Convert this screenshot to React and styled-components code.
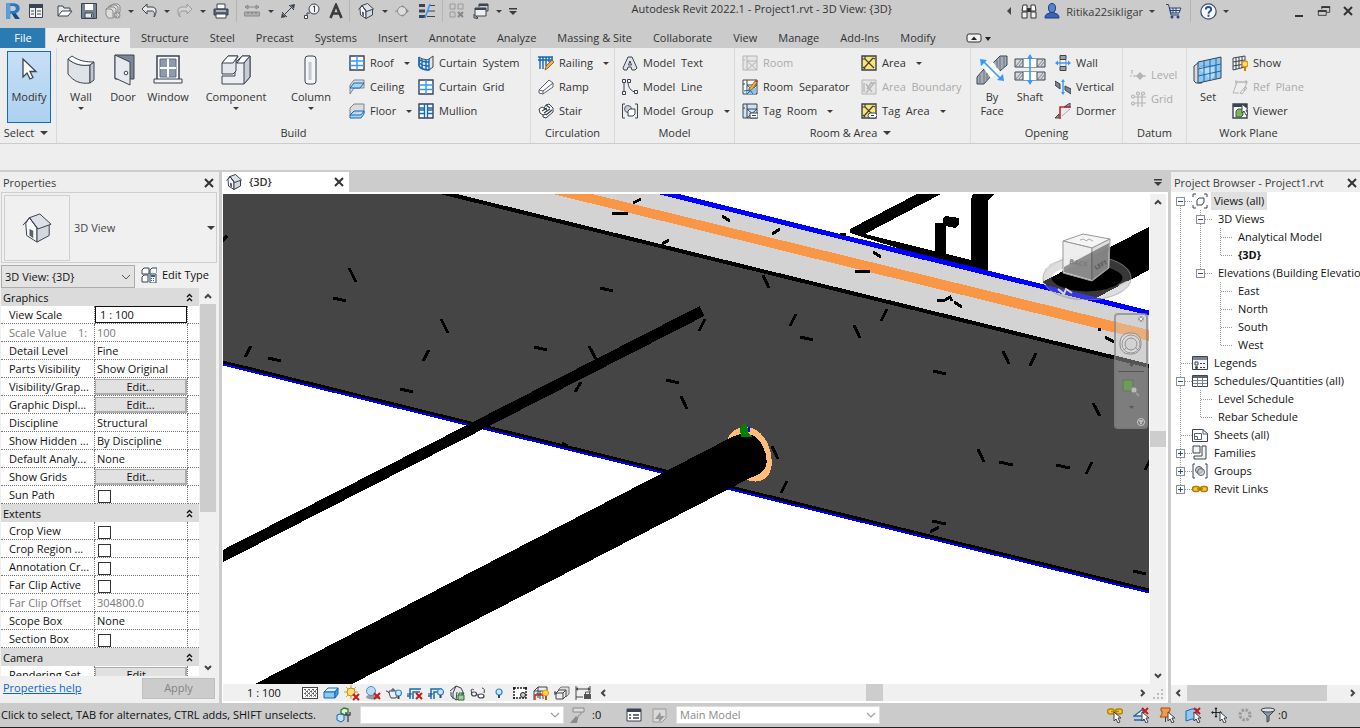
import React from 'react'
import styled, { createGlobalStyle, css } from 'styled-components'

const GlobalStyle = createGlobalStyle`
  * { box-sizing: border-box; }
  body {
    margin: 0;
    overflow: hidden;
    background: #cccccc;
    color: #1e1e1e;
    font-family: "Open Sans", "Noto Sans", sans-serif;
    font-size: 11px;
    line-height: 16px;
  }
  button, input, select {
    font: inherit;
    color: inherit;
    margin: 0;
    padding: 0;
    border: 0;
    border-radius: 0;
    background: none;
  }
  svg { display: block; flex: none; }
`

/* ---------- icons ---------- */

const ink = '#3a4351'
const blue = '#1468b8'
const sky = '#3399ff'
const off = '#b4b4b4'

const line = (d, stroke = ink, width = 1, fill = 'none') => (
  <path d={d} stroke={stroke} strokeWidth={width} fill={fill} />
)

const redX = (x, y) => line(`M${x} ${y}l6 6M${x + 6} ${y}l-6 6`, '#d01818', 2)
const bulb = (x, y) => (
  <g>
    <circle cx={x} cy={y} r="3" fill="#cfe6fb" stroke="#2d83d6" strokeWidth="1.2" />
    <path d={`M${x - 1} ${y + 3}h2v3h-2z`} fill={ink} />
  </g>
)
const cursor = (x, y) => (
  <path
    transform={`translate(${x} ${y})`}
    d="M0 0v9l2-2 2 4 2-1-2-4h3z"
    fill="#fff"
    stroke={ink}
    strokeWidth="1"
  />
)
const pencil = (
  <g>
    <path d="M8 9l5-7 2 1.500-5 7-3 1.500z" fill="#f5b335" stroke="#8a5a12" strokeWidth=".8" />
    <path d="M13 2l1-1.500 2 1.500-1 1.500z" fill="#c0392b" />
  </g>
)
const house = (
  <g strokeLinejoin="round" stroke={ink}>
    <path d="M4 11l4-6 8 11v15L5 24z" fill="#fbfbfc" vectorEffect="non-scaling-stroke" />
    <path d="M16 15l13-4v13l-13 7z" fill="#d3d7de" vectorEffect="non-scaling-stroke" />
    <path d="M8 5l11-4 12 11-14 5z" fill="#dde1e7" vectorEffect="non-scaling-stroke" />
    <path d="M1 13l7-8 9 12" fill="none" vectorEffect="non-scaling-stroke" />
    <path d="M8 17l4 2v8l-4-3z" fill="#59616e" stroke="none" />
  </g>
)
const roomBox = (color, fill) => (
  <g>
    <path d="M1 1h14v14H1z" fill={fill} stroke={color} />
    <path d="M5 1v5M1 5h2" stroke={color} fill="none" />
    <path d="M5 6h10M5 6v9M5 6l10 9M15 6L5 15" stroke={color} fill="none" />
  </g>
)
const areaBox = (
  <g>
    <path d="M1 1h14v14H1z" fill="#ffe36b" stroke={ink} strokeWidth="1.400" />
    <path d="M4 1v3H1M4 4l9 9M12 3l-9 10M12 3l2 1M2 12l2 2" stroke={ink} fill="none" strokeWidth="1.200" />
  </g>
)

const glyphs = {
  close: line('M4 4l8 8M12 4l-8 8', '#333', 2),
  chevronDown: line('M4 6l4 4 4-4', '#555', 1),
  chevronPale: line('M4 6l4 4 4-4', '#a0a0a0', 1.2),
  chevronUp: line('M5 10l3-3 3 3', '#444', 2),
  chevronDn: line('M5 6l3 3 3-3', '#444', 2),
  chevronLeft: line('M9 5L6 8l3 3', '#444', 2),
  chevronRight: line('M7 5l3 3-3 3', '#444', 2),
  collapse: line('M5 8l2.500-2.500L10 8M5 12l2.500-2.500L10 12', '#111', 1.4),
  caret: <path d="M5 7h6l-3 3z" fill="#3c3c3c" />,
  caretBig: <path d="M4 6h8l-4 4z" fill="#3c3c3c" />,
  caretLeft: <path d="M10 4v8L6 8z" fill="#444" />,
  more: <path d="M4 5h8v1.500H4zM4 8h8l-4 4z" fill="#3c3c3c" />,

  revit: (
    <g>
      <path d="M2 1h6c4 0 6 2 6 4.500S12 9.500 10.500 10L14 15h-4L7 10.500H5.500V15H2z" fill="#2c78bd" />
      <path d="M5.500 3.500v4.500H8c1.500 0 2.500-1 2.500-2.200S9.500 3.500 8 3.500z" fill="#cbcbcb" />
      <path d="M2 1h3.500v14H2z" fill="#5b9fd8" />
      <path d="M7 10.500h3.500L14 15h-4z" fill="#174d83" />
    </g>
  ),
  ui: (
    <g>
      <path d="M1.500 1.500h13v13h-13z" fill="#f4f4f4" stroke={ink} />
      <path d="M1 1h14v4H1z" fill={ink} />
      {line('M3 8h3M3 11h3M9 8h4M9 11h4M7.500 5v10')}
    </g>
  ),
  open: (
    <g strokeLinejoin="round">
      <path d="M1 13V3h5l1 2h6v3" fill="#e9e9e9" stroke={ink} />
      <path d="M1 13l4-5h10l-4 5z" fill="#fff" stroke={ink} />
    </g>
  ),
  save: (
    <g>
      <path d="M.5.500h15v15h-15z" fill="#788494" stroke={ink} />
      <path d="M4 1h8v6H4z" fill="#fff" />
      <path d="M4 10h8v5H4z" fill="#e8e8e8" stroke={ink} />
      <path d="M10 11h1v3h-1z" fill={ink} />
    </g>
  ),
  sync: (
    <g>
      <path d="M5 4l3-3h5l2 2v6l-3 3M1 6l3-2h5l2 2v6l-3 3H3l-2-3zM1 6h5l2 2v6M3 4l3-2h5l2 2v6" fill="#dcdcdc" stroke="#888" />
      <circle cx="12" cy="12" r="3.500" fill="#999" />
      {line('M10 12h4M12 10l2 2-2 2', '#ddd')}
    </g>
  ),
  undo: line('M6 1L1 6l5 5V8h5c2 0 3 2 2 6 3-4 3-10-2-10H6z', ink, 1, '#e8e8e8'),
  redo: line('M10 1l5 5-5 5V8H5c-2 0-3 2-2 6-3-4-3-10 2-10h5z', '#9a9a9a', 1, '#d4d4d4'),
  print: (
    <g>
      <path d="M4 1h8v5H4z" fill="#fff" stroke={ink} />
      <path d="M1 6h14v6H1z" fill="#59616e" stroke={ink} />
      <path d="M3 8h10" stroke="#fff" />
      <path d="M3 11h10v4H3z" fill="#fff" stroke={ink} />
    </g>
  ),
  measure: (
    <g>
      {line('M1 4h14M1 4l3-2v4zM15 4l-3-2v4z', '#888')}
      <path d="M.5 9h15v4H.500z" fill="#b0b0b0" stroke="#8a8a8a" />
      {line('M4 9v2M8 9v2M12 9v2', '#777')}
    </g>
  ),
  dim: (
    <g>
      {line('M3 13L13 3M2 9l5 5M9 2l5 5')}
      <path d="M1 15l1-5 4 4zM15 1l-5 1 4 4z" fill={ink} />
    </g>
  ),
  tag: (
    <g>
      {line('M2 14h1v-4h3')}
      <path d="M.5 12.500h3v3h-3z" fill="#fff" stroke={ink} />
      <circle cx="10" cy="6" r="5" fill="#f1f1f1" stroke={ink} />
      {line('M9 4l1.500-1v6')}
    </g>
  ),
  textA: line('M2.500 15L8 2l5.500 13M5 10.500h6', '#3c3c3c', 2.6),
  house,
  section: (
    <g>
      <circle cx="8" cy="8" r="4.500" fill="#ddd" stroke="#8a8a8a" />
      <path d="M8 2l7 6-7 6V12a4 4 0 000-8z" fill="#8a8a8a" />
      {line('M1 8h3', '#8a8a8a')}
    </g>
  ),
  thin: (
    <g>
      <path d="M0 1h6v3H0zM0 6.500h6v3H0zM0 12h6v3H0z" fill={ink} />
      {line('M10 2.500h6M9 8h7M8 13.500h8')}
      {line('M6 15L11 1', sky, 1.5)}
    </g>
  ),
  closeHidden: (
    <g>
      {line('M1 1h5v5H1zM9 1h5v5H9zM1 9h5v5H1z', '#999')}
      {line('M9 9l5 5M14 9l-5 5', '#888', 2)}
    </g>
  ),
  switchWin: (
    <g>
      {line('M6 4V1h9v7h-2')}
      <path d="M6 1h9v2H6z" fill={ink} />
      <path d="M2 5h11v8H2z" fill="#eee" stroke={ink} />
      <path d="M2 5h11v2H2z" fill={ink} />
      {line('M1 11v4h4M3 13l2 2-2 1')}
    </g>
  ),
  binoculars: (
    <g>
      <path d="M2 2h4v6H1zM10 2h4l1 6h-5z" fill="#fff" stroke="#333" />
      <path d="M1 9h5v6H1zM10 9h5v6h-5z" fill="#eee" stroke="#333" />
      <path d="M6 5h4v4H6z" fill="#333" />
    </g>
  ),
  user: (
    <g>
      <path d="M1 15c0-4 2-4 5-5V8h4v2c3 1 5 1 5 5z" fill="#3563b8" stroke="#1f3d7c" />
      <ellipse cx="8" cy="5" rx="3.500" ry="4.500" fill="#5483d6" stroke="#1f3d7c" />
    </g>
  ),
  cart: (
    <g>
      <path d="M3.500 5H15l-2 5H5z" fill="#dfe6f3" stroke="#2c4474" />
      {line('M0 1.500h2.500L5 12h8M7 5v5M10 5v5M4 7.500h10', '#2c4474')}
      <circle cx="6" cy="14" r="1.500" fill="#2c4474" />
      <circle cx="12" cy="14" r="1.500" fill="#2c4474" />
    </g>
  ),
  help: (
    <g>
      <circle cx="8" cy="8" r="7.200" fill="#f7f9fc" stroke="#44506a" strokeWidth="1.200" />
      {line('M5.500 6c0-3 5-3 5 0 0 2-2.500 1.500-2.500 4M8 11v2', '#1f4e9c', 1.8)}
    </g>
  ),
  minimise: line('M4 13h8', '#333', 2),
  restore: (
    <g>
      {line('M5.500 6V3.500h9v6H11', '#333', 1)}
      {line('M5 3.500h10', '#333', 2)}
      {line('M1.500 8h9v5h-9z', '#333', 1)}
      {line('M1 8h10', '#333', 2)}
    </g>
  ),

  modify: <path d="M10 5v18l4-4 3 6 3-1.500-3-6h6z" fill="#fff" stroke={ink} strokeWidth="1.300" />,
  wall: (
    <g strokeLinejoin="round" stroke={ink}>
      <path d="M3 5c8 6 15 7 22 6v18C16 30 9 28 3 20z" fill="#dfe2e7" />
      <path d="M3 5l4-3c7 5 14 6 22 6l-4 3C17 12 10 11 3 5z" fill="#fff" />
      <path d="M25 11l4-3v18l-4 3z" fill="#c3c8d0" />
    </g>
  ),
  door: (
    <g stroke={ink}>
      <path d="M8 1h19v24H8z" fill="#7e8797" />
      <path d="M8 1l15 7v23L8 24z" fill="#e6e9ed" strokeLinejoin="round" />
      <circle cx="19" cy="19" r="1.800" fill="#fff" />
    </g>
  ),
  window: (
    <g stroke={ink}>
      <path d="M5 2h22v24H5z" fill="#fff" strokeWidth="1.500" />
      <path d="M8 5h16v18H8z" fill="#8f9bad" stroke="#5f6a7b" />
      <path d="M16 5v18M8 14h16" stroke="#fff" strokeWidth="2" />
      <path d="M2 25h28v4H2z" fill="#f3f4f6" />
    </g>
  ),
  component: (
    <g stroke={ink} strokeLinejoin="round">
      <path d="M2 22h13V11l2-4 5-5h8v21l-6 7H2z" fill="#eceef1" />
      <path d="M2 9l6-7h10l-2 4v11l-3 3H2z" fill="#e3e6ea" />
      <path d="M2 9l6-7h10l-5 7z" fill="#fff" />
      <path d="M17 9l5-7h8l-6 7z" fill="#fff" />
      <path d="M24 9l6-7v21l-6 7z" fill="#c8cdd5" />
    </g>
  ),
  column: (
    <g stroke={ink}>
      <rect x="10" y="2" width="11" height="28" rx="3" fill="#f5f6f8" />
      <path d="M15 8v18" stroke="#c4c9d1" strokeWidth="3" />
    </g>
  ),
  roof: (
    <g>
      <path d="M1 1h14v14H1z" fill="#fff" stroke={ink} strokeWidth="1.400" />
      {line('M8 1v14M1 6h14M1 10.500h14', sky, 1.4)}
    </g>
  ),
  ceiling: (
    <g>
      <path d="M1 6l4-5h10v8H5l-4 6z" fill="#d9dce0" stroke="#7c8490" />
      <path d="M1 9l4-5h10l-4 5z" fill="#a8d4f5" stroke={blue} />
    </g>
  ),
  floor: (
    <g>
      <path d="M1 12V5l4-4h10v9l-4 4" fill="#d9dce0" stroke="#7c8490" />
      <path d="M1 12l4-4h10l-3 4zM1 12v3h11l3-4V8" fill="#a8d4f5" stroke={blue} />
    </g>
  ),
  curtainSystem: (
    <g strokeLinejoin="round">
      <path d="M1 2c4 3 9 3 10 2l4-3v11l-4 3c-4 0-8-1-10-4z" fill="#e4e7ec" stroke={ink} />
      {line('M1 5c4 2 7 2 10 2M1 8c4 3 7 3 10 3M4 4v9M8 5v10M1 2v9c2 3 6 4 10 4V4', blue, 1.4)}
    </g>
  ),
  mullion: (
    <g>
      <path d="M1 1h14v14H1z" fill="#fff" stroke={ink} strokeWidth="1.400" />
      {line('M6.500 1v14M9.500 1v14M1 5h5M1 10.500h5M10 5h5M10 10.500h5M1 7h5M10 7h5', blue, 1.4)}
    </g>
  ),
  railing: (
    <g>
      {line('M0 2h15M0 5h15M2 2v12M5 2v12M8 2v9M11 2v5M14 2v3', blue, 1.4)}
      <path d="M7 15l1-4 6-6 2 2-6 6z" fill="#f5b335" stroke="#8a4a12" strokeWidth=".8" />
    </g>
  ),
  ramp: (
    <g strokeLinejoin="round">
      <path d="M1 11L11 1l4 3v4L5 15 1 14z" fill="#fff" stroke="#5a626e" />
      {line('M1 11l4 1L15 4M5 12v3', '#5a626e')}
    </g>
  ),
  stair: (
    <g strokeLinejoin="round">
      <path d="M1 6l3-2 2 1 2-3 3-1 4 4v4l-7 6-3-1V12L2 10z" fill="#fff" stroke={ink} />
      {line('M4 8l5-3M6 10l6-4M8 12l6-5M6 5l3 2M8 2l4 3M5 12l3-1', ink, 1.3)}
    </g>
  ),
  modelText: (
    <g strokeLinejoin="round">
      <path d="M1 13L6 2h4l5 11-2 2h-3l-1-3H6l-1 3H2z" fill="#dfe2e7" stroke={ink} />
      <path d="M8 6l1.500 4H6.500z" fill="#fff" stroke={ink} />
    </g>
  ),
  modelLine: (
    <g>
      {line('M2 3v10M6 3c0 5 3 10 8 10')}
      {line('M.5.500h3v3h-3zM.5 12.500h3v3h-3zM5.500.500h3v3h-3zM12.500 11.500h3v3h-3z', ink, 1, '#fff')}
    </g>
  ),
  modelGroup: (
    <g>
      {line('M3 1H.500v14H3M13 1h2.500v14H13')}
      <circle cx="6" cy="6" r="3.500" fill="#c9ced6" stroke="#5a626e" />
      <path d="M6 8l2-2h5v5l-2 2H6z" fill="#fff" stroke={ink} />
    </g>
  ),
  room: roomBox(off, '#e6e6e6'),
  roomSep: (
    <g>
      {roomBox(ink, '#fff')}
      <path d="M5 9h9v6H5z" fill="#8cc4ee" />
      {line('M2 12l6-1M8 11l3 4M5 15l4-4', blue)}
      {pencil}
    </g>
  ),
  tagRoom: (
    <g>
      {roomBox(ink, '#cfe3f3')}
      <path d="M8 10h8v5H8z" fill="#fff" stroke={ink} />
      {line('M10 12.500h4')}
    </g>
  ),
  area: areaBox,
  areaBoundary: (
    <g>
      <path d="M1 1h14v14H1z" fill="#e6e6e6" stroke={off} />
      {line('M5 5l6 8M3 4v9M9 4h5M5 14L14 3M6 10l5-7', off, 1.3)}
    </g>
  ),
  tagArea: (
    <g>
      {areaBox}
      <rect x="7" y="10" width="9" height="5" rx="2.500" fill="#fff" stroke={ink} />
      {line('M10 12.500h3')}
    </g>
  ),
  byFace: (
    <g>
      <path d="M1 23l7-8 7 7-7 8H1z" fill="#a6acb6" stroke={ink} />
      <path d="M17 9l7-7h7v9l-7 6z" fill="#a6acb6" stroke={ink} />
      <path d="M8 15l9-7 7 9-9 7z" fill="#fff" />
      {line('M4 21v9M8 16v14M11 19v7M21 6v8M24 3v13M28 3v10', '#6a727e')}
      {line('M7 7l18 18', sky, 1.6)}
      <path d="M4 5l7 1-6 6zM28 27l-1-7-6 6z" fill={sky} />
    </g>
  ),
  shaft: (
    <g>
      <path d="M1 5h30v8H1zM1 18h30v8H1z" fill="#d4d7dc" stroke={ink} />
      <path d="M9 5h14v8H9zM9 18h14v8H9z" fill="#fff" />
      {line('M9 5v8M23 5v8M9 18v8M23 18v8')}
      {line('M2 12l5-6M5 12l4-5M24 12l5-6M27 12l4-5M2 25l5-6M5 25l4-5M24 25l5-6M27 25l4-5', '#7d8590')}
      {line('M16 3v26', sky, 1.6)}
      <path d="M16 0l3 5h-6zM16 31l3-5h-6z" fill={sky} />
    </g>
  ),
  openWall: (
    <g>
      <path d="M5 .5h6v4H5zM5 11.500h6v4H5z" fill="#9aa1ab" stroke={ink} />
      {line('M5 5v6M11 5v6', '#888')}
      {line('M2 8h12', sky, 1.4)}
      <path d="M0 8l3-2.500v5zM16 8l-3-2.500v5z" fill={sky} />
    </g>
  ),
  openVertical: (
    <g>
      <path d="M0 2l5 3v5L0 6zM10 7l6 3v5l-6-4z" fill="#7d8590" stroke={ink} />
      {line('M8 2v12', sky, 1.4)}
      <path d="M8 0l2 3H6zM8 16l2-3H6z" fill={sky} />
    </g>
  ),
  dormer: (
    <g>
      <path d="M0 15l4-4v4zM9 4l6-4v4z" fill="#9aa1ab" stroke={ink} />
      {line('M5 16V4h11', '#c62828', 1.6)}
      {line('M7 13l8-7', '#aaa')}
    </g>
  ),
  level: (
    <g>
      {line('M0 9h2M3 9h2M14 9h2M1 4l1-1v4M4 9h11', off)}
      <path d="M10 5l4 4-4 4-4-4z" fill={off} />
    </g>
  ),
  grid: line('M5 6h11M5 12h11M8 4v12M12 4v12M8 1a1.500 1.500 0 100 3 1.500 1.500 0 000-3M13 1a1.500 1.500 0 100 3 1.500 1.500 0 000-3M3 4a1.500 1.500 0 100 3 1.500 1.500 0 000-3M3 11a1.500 1.500 0 100 3 1.500 1.500 0 000-3', off, 1.2),
  setPlane: (
    <g strokeLinejoin="round">
      <path d="M2 12l4-3h4v20H4l-2-2z" fill="#d7dbe1" stroke={ink} />
      <path d="M6 8l23-5v21L6 29z" fill="#8fc8ee" stroke={ink} />
      <path d="M6 14l4-2h13v11l-4 3" fill="#b9dcf5" stroke="#7d9cb8" />
      {line('M12 7v21M18 6v20M24 4v21M6 15l23-5M6 22l23-5', blue, 1)}
    </g>
  ),
  show: (
    <g>
      <path d="M1 3l12-2v11L1 15z" fill="#f2f3f5" stroke={ink} />
      {line('M4 3v11M7 2v11M10 2v11M1 7l12-2M1 11l12-2')}
      <circle cx="13" cy="9" r="3" fill="#ffe27a" stroke="#ef8e00" strokeWidth="1.300" />
      <path d="M12 12h2v4h-2z" fill="#d67a00" />
    </g>
  ),
  refPlane: line('M1 14L5 3h10l-3 9M1 14h6M3 3h13M4 1v4M14 1v4M8 14l5-6 2 1-5 6z', off),
  viewer: (
    <g>
      <path d="M1 1h14v14H1z" fill="#fff" stroke={ink} strokeWidth="1.400" />
      <path d="M1 1h14v3H1z" fill={ink} />
      <path d="M4 8l2-2h5v6l-2 2H4z" fill="#7fb35a" stroke="#2f6b2c" />
      {cursor(10, 1)}
    </g>
  ),
  editType: (
    <g>
      {line('M1 3l2-2h5v6H1zM9 3l2-2h5v5M1 10l2-2h4v7H1zM9 3v4', ink, 1, '#fff')}
      <path d="M9 7h6v9H9z" fill="#fff" stroke={ink} />
      <path d="M10 8h4v2h-4zM10 11h1v1h-1zM12 11h1v1h-1zM10 13h1v1h-1zM12 13h1v1h-1z" fill={blue} />
    </g>
  ),

  detail: (
    <g shapeRendering="crispEdges">
      <path d="M.5 2.500h15v11H.500z" fill="#fff" stroke="#444" />
      <path d="M2 4.500h13M2 8.500h13" stroke="#666" strokeDasharray="2 2" />
      <path d="M4 6.500h11M4 10.500h11" stroke="#666" strokeDasharray="2 2" />
      <path d="M3 5.500h12M3 7.500h12M3 9.500h12M3 11.500h12" stroke="#999" strokeDasharray="1 1" />
    </g>
  ),
  style: (
    <g strokeLinejoin="round">
      <path d="M1 7l4-4h10l-3 4z" fill="#dff1ff" stroke={blue} />
      <path d="M1 7h11v6H1z" fill="#8cc8f2" stroke={blue} />
      <path d="M12 7l3-4v6l-3 4z" fill="#4b9fdc" stroke={blue} />
    </g>
  ),
  sun: (
    <g>
      {line('M7 0v14M0 7h14M2 2l10 10M12 2L2 12', '#d9a21f')}
      <circle cx="7" cy="7" r="4" fill="#ffe27a" stroke="#c98a10" />
      {redX(9, 9)}
    </g>
  ),
  shadow: (
    <g>
      <ellipse cx="8" cy="12" rx="7" ry="2.500" fill="#9a9a9a" />
      <circle cx="6" cy="6" r="4.500" fill="#b9dcf6" stroke="#4b8fc8" />
      {redX(9, 8)}
    </g>
  ),
  teapot: (
    <g>
      <path d="M3 6h8c1 3 0 5-1 7H5C4 11 3 9 3 6zM3 8L1 6H0M5 5h4M7 3v2" fill="#eee" stroke={ink} />
      {bulb(12.5, 8)}
    </g>
  ),
  crop: (
    <g>
      {line('M0 11h3M3 14V4h11M6 14V7h7', blue, 1.5)}
      {line('M0 9h5')}
      {redX(9, 8)}
    </g>
  ),
  cropRegion: (
    <g>
      {line('M0 11h3M3 14V4h11M6 14V7h7', blue, 1.5)}
      {line('M0 9h5')}
      {bulb(12.5, 7)}
    </g>
  ),
  lockView: (
    <g>
      <path d="M1 6l6-5 5 2 3 6-2-1v5l-6 2-5-4V7" fill="#e7e9ed" stroke={ink} />
      {line('M7 1L4 8v6M8 7l-1 8')}
      <path d="M9 10h6v5H9z" fill="#9fd0a4" stroke="#2f6b2c" />
      {line('M10 10V8h4v2', '#2f6b2c')}
    </g>
  ),
  glasses: (
    <g>
      {line('M1 5c1-1 2-1 3 0M12 3c2 0 3 2 2 5M1 5l1 4M5 9l3 1')}
      <ellipse cx="4" cy="9" rx="2.500" ry="2" fill="#fff" stroke={ink} strokeWidth="1.200" />
      <ellipse cx="11" cy="11" rx="3" ry="2" fill="#fff" stroke={ink} strokeWidth="1.200" />
    </g>
  ),
  reveal: bulb(8, 7),
  tempView: (
    <g>
      <path d="M2 3h12v10H2z" fill="#fff" stroke="#222" strokeDasharray="2 1" strokeWidth="1.500" />
      {line('M1 3h2M13 3h2M1 13h2', '#222', 2)}
      <circle cx="11" cy="10" r="2.500" fill="#ccc" stroke="#222" />
    </g>
  ),
  analytical: (
    <g>
      {line('M1 6l4-4h9M1 6h9v8M1 6v9M5 2v11M14 2v6M3 9h9M7 6v8', ink)}
      {line('M2 9v6M2 10h8', '#c62828', 1.4)}
      <circle cx="12.500" cy="8" r="3" fill="#ffd54a" stroke="#ef8e00" />
      <path d="M12 11h2v4h-2z" fill="#a85d00" />
    </g>
  ),
  displace: (
    <g>
      <path d="M4 5l3-3h8v7l-3 3" fill="#ddd" stroke="#777" />
      <path d="M2 8l3-3h7v6l-3 3H2zM2 8h7v6M9 8l3-3" fill="#eee" stroke="#444" />
      {line('M1 6v4M0 8h3')}
    </g>
  ),
  constraints: (
    <g>
      {line('M1 1v14M15 1v7M1 4h14M1 12h7', '#444')}
      <path d="M3 2v4L1 4zM13 2v4l2-2z" fill="#444" />
      <path d="M9 9h7v5H9z" fill="#555" />
      {line('M10.500 9V7h4v2', '#555')}
    </g>
  ),

  worksets: (
    <g>
      <path d="M5 3l3-2 4 1v4l-3 2-4-2z" fill="#dff0d9" stroke="#2f7b2c" strokeWidth="1.300" />
      <path d="M1 8l3-1 4 1v5l-3 2-4-2z" fill="#c5e3f8" stroke={blue} />
      {line('M12 8v7M10 5v3h4V5', ink, 1.3)}
    </g>
  ),
  design: (
    <g>
      <path d="M3 1h11v4H3zM11 5v2L8 9v2H6L3 14" fill="#ddd" stroke="#8a8a8a" />
      <path d="M6 9l2 2-1 5H0z" fill="#8a8a8a" />
    </g>
  ),
  options: (
    <g>
      <path d="M1 2h14v12H1z" fill="#fff" stroke={ink} />
      <path d="M1 2h14v3H1z" fill={ink} />
      {line('M3 8h2M3 11h2M7 8h6M7 11h6', ink, 1.4)}
    </g>
  ),
  addSet: (
    <g>
      <path d="M1 2h13v9l-4 4H1z" fill="#d9d9d9" stroke="#999" />
      <path d="M8 5l-5 7h4v3l6-6H9z" fill="#999" />
    </g>
  ),
  pickLink: (
    <g>
      {line('M3 2h2a2.500 2.500 0 010 5H3a2.500 2.500 0 010-5zM11 2h2a2.500 2.500 0 010 5h-2a2.500 2.500 0 010-5zM4 4.500h8', '#b98500', 1.5, '#f6c73a')}
      {cursor(7, 5)}
    </g>
  ),
  pickUnderlay: (
    <g>
      <path d="M1 9l9-7v7zM1 13h11" fill="#e8f3fc" stroke={blue} strokeWidth="1.300" />
      {redX(9, 1)}
      {cursor(9, 5)}
    </g>
  ),
  pickPin: (
    <g>
      <path d="M2 1h9v3h-1v3l2 3H1l2-3V4H2z" fill="#f59a4a" stroke="#a84a10" />
      {line('M6.500 10v5')}
      {cursor(9, 5)}
    </g>
  ),
  pickFace: (
    <g>
      <path d="M1 4l6-2h5v11l-5-1-6 2z" fill="#8fc8ee" stroke={blue} />
      {redX(9, 1)}
      {cursor(9, 5)}
    </g>
  ),
  drag: (
    <g>
      {line('M5 1v9M1 5.500h9M4 2l1-1 1 1M4 9l1 1 1-1M2 4.500l-1 1 1 1M9 4.500l1 1-1 1', '#222', 1.2)}
      {cursor(9, 5)}
    </g>
  ),
  ring: <circle cx="8" cy="8" r="5" fill="none" stroke="#9b9b9b" strokeWidth="3" strokeDasharray="2.500 1.400" />,
  filter: (
    <g>
      <path d="M1 3l6 6v6l2-1V9l6-6z" fill="#8f98a5" stroke={ink} strokeLinejoin="round" />
      <ellipse cx="8" cy="3" rx="7" ry="2" fill="#dfe3e8" stroke={ink} />
    </g>
  ),

  views: (
    <g>
      {line('M1 4V1h3M12 1h3v3M1 12v3h3M12 15h3v-3')}
      <path d="M5 7l2-2h5v4l-2 3H5z" fill="#fff" stroke={ink} />
    </g>
  ),
  legends: (
    <g>
      <path d="M.5 1.500h15v13H.500z" fill="#f4f5f7" stroke={ink} />
      <path d="M1 2h14v3H1z" fill="#7c8490" />
      <path d="M3 7h3v3H3z" fill="#fff" stroke={ink} />
      <circle cx="4.500" cy="12.500" r="1.500" fill={ink} />
      <path d="M8 8.500h6M8 12.500h6" stroke={ink} strokeDasharray="2 1" />
    </g>
  ),
  schedules: (
    <g>
      <path d="M.5 2.500h15v11H.500z" fill="#fff" stroke={ink} />
      <path d="M1 3h14v2H1z" fill="#5c6573" />
      {line('M1 7.500h14M1 10.500h14M5.500 5v9M10.500 5v9', '#7c8490')}
    </g>
  ),
  sheets: (
    <g>
      <path d="M.5 2.500h10l5 4v8h-15z" fill="#fff" stroke={ink} />
      {line('M11 2v5h5M2.500 6.500h7v6h-7zM2.500 9.500h3v3', '#5a626e')}
    </g>
  ),
  families: line('M1 1h7v7H1zM10 1h4v13H2v-3h8z', ink, 1, '#f2f3f5'),
  groups: (
    <g>
      {line('M3 1H1v14h2M13 1h2v14h-2')}
      <circle cx="7" cy="7" r="3.500" fill="#c9ced6" stroke="#5a626e" />
      <circle cx="9" cy="9" r="3.500" fill="#c9ced6" fillOpacity=".6" stroke="#5a626e" />
    </g>
  ),
  links: line('M3 5.500h2a2.500 2.500 0 010 5H3a2.500 2.500 0 010-5zM11 5.500h2a2.500 2.500 0 010 5h-2a2.500 2.500 0 010-5zM5 8h6', '#b07c00', 1.6, '#f6c73a'),
}

const bigGlyphs = ['house', 'modify', 'wall', 'door', 'window', 'component', 'column', 'byFace', 'shaft', 'setPlane']

const Glyph = ({ name, size = 16 }) => {
  const box = bigGlyphs.includes(name) ? 32 : 16
  return (
    <svg width={size} height={size} viewBox={`0 0 ${box} ${box}`} fill="none" aria-hidden="true">
      {glyphs[name]}
    </svg>
  )
}

/* ---------- title bar ---------- */

const Window = styled.div`
  display: flex;
  flex-direction: column;
  height: 100vh;
  border-bottom: 1px solid #222;
`

const TitleBar = styled.header`
  display: flex;
  height: 28px;
  padding-bottom: 6px;
  background: #cbcbcb;
`

const ToolButton = styled.button`
  display: flex;
  align-items: center;
  justify-content: center;
  flex: none;
  width: ${({ $w }) => $w}px;
`

const Divider = styled.span`
  flex: none;
  width: 1px;
  margin: 0 ${({ $gap = 2 }) => $gap}px;
  background: #b4b4b4;
`

const Spacer = styled.span`
  flex: none;
  width: ${({ $w }) => $w}px;
`

const WindowTitle = styled.h1`
  flex: 1;
  margin: 0;
  padding-top: 1px;
  font-size: 11px;
  font-weight: 400;
  text-align: center;
  white-space: nowrap;
  color: #333;
`

const UserName = styled.span`
  padding: 4px 0 0 3px;
  color: #3b3b3b;
`

const quickTools = [
  ['revit', 25, 'Revit'], ['ui', 22, 'Home'], ['', 6], ['open', 24, 'Open'], ['save', 24, 'Save'],
  ['sync', 24, 'Synchronize'], ['caret', 11, 'Synchronize options'], ['undo', 25, 'Undo'],
  ['caret', 11, 'Undo list'], ['redo', 25, 'Redo'], ['caret', 11, 'Redo list'], ['print', 26, 'Print'],
  ['|', 2], ['measure', 26, 'Measure'], ['caret', 11, 'Measure options'], ['dim', 24, 'Aligned dimension'],
  ['tag', 24, 'Tag'], ['textA', 23, 'Text'], ['|', 2], ['house', 27, 'Default 3D view'],
  ['caret', 11, '3D view options'], ['section', 24, 'Section'], ['thin', 26, 'Thin lines'], ['|', 2],
  ['closeHidden', 24, 'Close inactive'], ['switchWin', 24, 'Switch windows'],
  ['caret', 11, 'Window list'], ['more', 18, 'Customize'],
]

const Title = () => (
  <TitleBar>
    {quickTools.map(([name, w, label], i) => {
      if (!name) return <Spacer key={i} $w={w} />
      if (name === '|') return <Divider key={i} $gap={w} />
      return (
        <ToolButton key={i} $w={w} aria-label={label}>
          <Glyph name={name} size={name === 'revit' ? 18 : 16} />
        </ToolButton>
      )
    })}
    <WindowTitle>Autodesk Revit 2022.1 - Project1.rvt - 3D View: {'{3D}'}</WindowTitle>
    <ToolButton $w={16} aria-label="Collapse search"><Glyph name="caretLeft" /></ToolButton>
    <ToolButton $w={24} aria-label="Search"><Glyph name="binoculars" /></ToolButton>
    <ToolButton $w={22} aria-label="Account"><Glyph name="user" /></ToolButton>
    <UserName>Ritika22sikligar</UserName>
    <ToolButton $w={18} aria-label="Account menu"><Glyph name="caret" /></ToolButton>
    <ToolButton $w={26} aria-label="App store"><Glyph name="cart" /></ToolButton>
    <Divider $gap={3} />
    <ToolButton $w={28} aria-label="Help"><Glyph name="help" size={17} /></ToolButton>
    <ToolButton $w={8} aria-label="Help menu"><Glyph name="caret" /></ToolButton>
    <Spacer $w={56} />
    <ToolButton $w={26} aria-label="Minimize"><Glyph name="minimise" /></ToolButton>
    <ToolButton $w={24} aria-label="Restore"><Glyph name="restore" size={14} /></ToolButton>
    <ToolButton $w={24} aria-label="Close"><Glyph name="close" /></ToolButton>
  </TitleBar>
)

/* ---------- ribbon ---------- */

const TabBar = styled.nav`
  display: flex;
  height: 20px;
  background: #cbcbcb;
`

const Tab = styled.button`
  padding: 0 10px 0 11px;
  line-height: 20px;
  white-space: nowrap;
  color: #333;
  ${({ $file }) => $file && css`
    width: 45px;
    margin-right: 1px;
    background: #2a7ab4;
    color: #fff;
  `}
  ${({ $active }) => $active && css`
    background: #eeeeee;
    color: #111;
  `}
`

const TabToggle = styled.button`
  display: flex;
  align-items: center;
  margin-left: 20px;
`

const Ribbon = styled.section`
  display: flex;
  flex: none;
  height: 96px;
  background: #eeeeee;
  border-bottom: 1px solid #cccccc;
`

const RibbonFoot = styled.div`
  flex: none;
  height: 28px;
  background: #eeeeee;
  border-bottom: 2px solid #cccccc;
`

const Panel = styled.div`
  display: flex;
  flex-direction: column;
  flex: none;
  width: ${({ $w }) => $w}px;
  padding-top: 3px;
  border-right: 1px solid ${({ $last }) => ($last ? 'transparent' : '#d9d9d9')};
`

const PanelBody = styled.div`
  display: flex;
  height: 72px;
  padding-left: ${({ $pad = 0 }) => $pad}px;
`

const PanelTitle = styled.h2`
  display: flex;
  align-items: center;
  justify-content: center;
  gap: 2px;
  height: 20px;
  margin: 0;
  font-size: 11px;
  font-weight: 400;
  color: #333;
`

const BigButton = styled.button`
  display: flex;
  flex-direction: column;
  align-items: center;
  flex: none;
  width: ${({ $w }) => $w}px;
  padding-top: 3px;
  line-height: 14px;
  color: #333;
  ${({ $active }) => $active && css`
    padding-top: 2px;
    margin-left: 7px;
    background: linear-gradient(#c6dff5, #aed1f0);
    border: 1px solid #1468c8;
  `}
  span { margin-top: 4px; }
  svg + span + svg { margin-top: -4px; }
`

const Stack = styled.div`
  display: flex;
  flex-direction: column;
  justify-content: center;
  flex: none;
  width: ${({ $w }) => $w}px;
`

const SmallButton = styled.button`
  display: flex;
  align-items: center;
  gap: 5px;
  height: 24px;
  white-space: pre;
  color: ${({ disabled }) => (disabled ? '#aaaaaa' : '#333')};
`

const Big = ({ icon, label, w, menu, active }) => (
  <BigButton $w={w} $active={active}>
    <Glyph name={icon} size={32} />
    <span>{label}</span>
    {menu && <Glyph name="caret" />}
  </BigButton>
)

const Small = ({ icon, label, menu, disabled }) => (
  <SmallButton disabled={disabled}>
    <Glyph name={icon} />
    {label}
    {menu && <Glyph name="caret" />}
  </SmallButton>
)

const ribbonTabs = ['Structure', 'Steel', 'Precast', 'Systems', 'Insert', 'Annotate', 'Analyze',
  'Massing & Site', 'Collaborate', 'View', 'Manage', 'Add-Ins', 'Modify']

const RibbonArea = () => (
  <>
    <TabBar>
      <Tab $file>File</Tab>
      <Tab $active>Architecture</Tab>
      {ribbonTabs.map((t) => <Tab key={t}>{t}</Tab>)}
      <TabToggle aria-label="Minimize ribbon">
        <svg width="26" height="16" viewBox="0 0 26 16" aria-hidden="true">
          <rect x="1" y="4" width="14" height="8" rx="2" fill="#f2f2f2" stroke="#333" />
          <path d="M5 10h6L8 6.500zM19 7h6l-3 4z" fill="#222" />
        </svg>
      </TabToggle>
    </TabBar>
    <Ribbon>
      <Panel $w={57}>
        <PanelBody><Big active icon="modify" label="Modify" w={44} /></PanelBody>
        <PanelTitle>Select <Glyph name="caretBig" /></PanelTitle>
      </Panel>
      <Panel $w={474}>
        <PanelBody>
          <Big icon="wall" label="Wall" w={48} menu />
          <Big icon="door" label="Door" w={36} />
          <Big icon="window" label="Window" w={54} />
          <Big icon="component" label="Component" w={82} menu />
          <Big icon="column" label="Column" w={68} menu />
          <Spacer $w={4} />
          <Stack $w={69}>
            <Small icon="roof" label="Roof" menu />
            <Small icon="ceiling" label="Ceiling" />
            <Small icon="floor" label="Floor" menu />
          </Stack>
          <Stack $w={110}>
            <Small icon="curtainSystem" label="Curtain  System" />
            <Small icon="roof" label="Curtain  Grid" />
            <Small icon="mullion" label="Mullion" />
          </Stack>
        </PanelBody>
        <PanelTitle>Build</PanelTitle>
      </Panel>
      <Panel $w={84}>
        <PanelBody $pad={7}>
          <Stack>
            <Small icon="railing" label="Railing" menu />
            <Small icon="ramp" label="Ramp" />
            <Small icon="stair" label="Stair" />
          </Stack>
        </PanelBody>
        <PanelTitle>Circulation</PanelTitle>
      </Panel>
      <Panel $w={120}>
        <PanelBody $pad={7}>
          <Stack>
            <Small icon="modelText" label="Model  Text" />
            <Small icon="modelLine" label="Model  Line" />
            <Small icon="modelGroup" label="Model  Group" menu />
          </Stack>
        </PanelBody>
        <PanelTitle>Model</PanelTitle>
      </Panel>
      <Panel $w={236}>
        <PanelBody $pad={7}>
          <Stack $w={119}>
            <Small icon="room" label="Room" disabled />
            <Small icon="roomSep" label="Room  Separator" />
            <Small icon="tagRoom" label="Tag  Room" menu />
          </Stack>
          <Stack $w={108}>
            <Small icon="area" label="Area" menu />
            <Small icon="areaBoundary" label="Area  Boundary" disabled />
            <Small icon="tagArea" label="Tag  Area" menu />
          </Stack>
        </PanelBody>
        <PanelTitle>Room &amp; Area <Glyph name="caretBig" /></PanelTitle>
      </Panel>
      <Panel $w={152}>
        <PanelBody $pad={2}>
          <Big icon="byFace" label={<>By<br />Face</>} w={38} />
          <Big icon="shaft" label="Shaft" w={38} />
          <Spacer $w={6} />
          <Stack>
            <Small icon="openWall" label="Wall" />
            <Small icon="openVertical" label="Vertical" />
            <Small icon="dormer" label="Dormer" />
          </Stack>
        </PanelBody>
        <PanelTitle>Opening</PanelTitle>
      </Panel>
      <Panel $w={64}>
        <PanelBody $pad={7}>
          <Stack>
            <Small icon="level" label="Level" disabled />
            <Small icon="grid" label="Grid" disabled />
          </Stack>
        </PanelBody>
        <PanelTitle>Datum</PanelTitle>
      </Panel>
      <Panel $w={124} $last>
        <PanelBody>
          <Big icon="setPlane" label="Set" w={42} />
          <Spacer $w={3} />
          <Stack>
            <Small icon="show" label="Show" />
            <Small icon="refPlane" label="Ref  Plane" disabled />
            <Small icon="viewer" label="Viewer" />
          </Stack>
        </PanelBody>
        <PanelTitle>Work Plane</PanelTitle>
      </Panel>
    </Ribbon>
    <RibbonFoot />
  </>
)

/* ---------- shared pieces ---------- */

const Workspace = styled.main`
  display: flex;
  flex: 1;
  gap: 3px;
  min-height: 0;
  background: #cccccc;
`

const PaneHeader = styled.div`
  display: flex;
  align-items: center;
  justify-content: space-between;
  flex: none;
  height: 20px;
  padding: 1px ${({ $right = 0 }) => $right}px 0 3px;
  background: #eeeeee;
  color: #3b3b3b;
  white-space: nowrap;
`

const IconButton = styled.button`
  display: flex;
  align-items: center;
  justify-content: center;
  flex: none;
  width: ${({ $w = 16 }) => $w}px;
  height: 16px;
`

const Scroll = styled.div`
  display: flex;
  flex: none;
  flex-direction: ${({ $vertical }) => ($vertical ? 'column' : 'row')};
  background: #f0f0f0;
  ${({ $vertical }) => ($vertical ? 'width: 16px;' : 'height: 16px;')}
`

const Track = styled.div`
  flex: ${({ $grow }) => $grow} 1 0;
`

const Thumb = styled.div`
  flex: ${({ $size }) => ($size ? `0 0 ${$size}px` : '8 1 0')};
  align-self: stretch;
  background: #cdcdcd;
`

const Select = styled.label`
  display: flex;
  align-items: center;
  flex: none;
  width: ${({ $w }) => $w}px;
  height: ${({ $h }) => $h}px;
  background: ${({ $bg = '#fff' }) => $bg};
  border: 1px solid ${({ $line = '#dddddd' }) => $line};
  color: ${({ $muted }) => ($muted ? '#8a8a8a' : '#111')};

  select {
    flex: 1;
    min-width: 0;
    padding-left: 3px;
    appearance: none;
    outline: none;
  }
`

/* ---------- properties ---------- */

const Properties = styled.aside`
  display: flex;
  flex-direction: column;
  flex: none;
  width: 219px;
  background: #f0f0f0;
`

const TypeBox = styled.div`
  display: flex;
  align-items: center;
  flex: none;
  height: 71px;
  margin: 0 2px 2px 1px;
  padding: 2px 1px 2px 2px;
  border: 1px solid #cfcfcf;
  color: #444;
`

const Thumbnail = styled.div`
  display: grid;
  place-items: center;
  width: 66px;
  height: 66px;
  margin-right: 4px;
  border: 1px solid #cfcfcf;
`

const TypeName = styled.span`
  flex: 1;
`

const InstanceRow = styled.div`
  display: flex;
  flex: none;
  height: 23px;
  padding-left: 1px;
`

const EditType = styled.button`
  display: flex;
  align-items: center;
  gap: 5px;
  height: 20px;
  margin-left: 6px;
  color: #111;
`

const GridArea = styled.div`
  display: flex;
  flex: 1 1 0;
  min-height: 0;
  padding: 0 3px 0 1px;
`

const GridClip = styled.div`
  flex: 1;
  overflow: hidden;
  background: #fff;
  margin-right: 1px;
`

const PropTable = styled.table`
  width: 100%;
  table-layout: fixed;
  border-spacing: 0;
  color: #111;

  th, td {
    height: 18px;
    padding: 0;
    line-height: 17px;
    font-weight: 400;
    text-align: left;
    white-space: pre;
    overflow: hidden;
    border-bottom: 1px dotted #777;
    border-right: 1px dotted #777;
  }
  th { padding-left: 8px; }
  td:last-child { border-right: 0; }
`

const LabelCol = styled.col`
  width: 94px;
`

const ValueCol = styled.col`
  width: 93px;
`

const GroupRow = styled.tr`
  && th {
    padding: 0 1px 0 2px;
    background: #dbdbdb;
    border: 0;
  }
  div {
    display: flex;
    align-items: center;
    justify-content: space-between;
  }
`

const PropRow = styled.tr`
  color: ${({ $muted }) => ($muted ? '#7a7a7a' : 'inherit')};
  td { padding-left: ${({ $flush }) => ($flush ? 0 : 2)}px; }
`

const ScaleInput = styled.input`
  display: block;
  width: 100%;
  height: 17px;
  padding-left: 4px;
  background: #fff;
  border: 1px solid #111;
`

const EditButton = styled.button`
  display: block;
  width: 100%;
  height: 16px;
  line-height: 13px;
  margin-top: 1px;
  background: #e1e1e1;
  border: solid #adadad;
  border-width: 1px 2px 2px 1px;
`

const Check = styled.input`
  display: block;
  appearance: none;
  width: 13px;
  height: 13px;
  margin: 3px 0 0 1px;
  background: #fff;
  border: 1px solid #333;
`

const PaneFoot = styled.div`
  display: flex;
  align-items: center;
  justify-content: space-between;
  flex: none;
  height: 27px;
  padding: 0 4px 3px 3px;

  a { color: #0a66cc; }
`

const ApplyButton = styled.button`
  width: 73px;
  height: 21px;
  background: #cccccc;
  border: 1px solid #bfbfbf;
  color: #838383;
`

const propGroups = [
  ['Graphics', [
    ['View Scale', 'input', '1 : 100'],
    ['Scale Value    1:', 'muted', '100'],
    ['Detail Level', 'text', 'Fine'],
    ['Parts Visibility', 'text', 'Show Original'],
    ['Visibility/Grap...', 'edit'],
    ['Graphic Displ...', 'edit'],
    ['Discipline', 'text', 'Structural'],
    ['Show Hidden ...', 'text', 'By Discipline'],
    ['Default Analy...', 'text', 'None'],
    ['Show Grids', 'edit'],
    ['Sun Path', 'check'],
  ]],
  ['Extents', [
    ['Crop View', 'check'],
    ['Crop Region ...', 'check'],
    ['Annotation Cr...', 'check'],
    ['Far Clip Active', 'check'],
    ['Far Clip Offset', 'muted', '304800.0'],
    ['Scope Box', 'text', 'None'],
    ['Section Box', 'check'],
  ]],
  ['Camera', [['Rendering Set...', 'edit']]],
]

const PropValue = ({ kind, value, id }) => {
  if (kind === 'input') return <ScaleInput id={id} defaultValue={value} />
  if (kind === 'edit') return <EditButton id={id}>Edit...</EditButton>
  if (kind === 'check') return <Check id={id} type="checkbox" />
  return value
}

const PropertiesPane = () => (
  <Properties>
    <PaneHeader $right={2}>
      Properties
      <IconButton aria-label="Close properties"><Glyph name="close" /></IconButton>
    </PaneHeader>
    <TypeBox>
      <Thumbnail><Glyph name="house" size={30} /></Thumbnail>
      <TypeName>3D View</TypeName>
      <IconButton $w={8} aria-label="Type list"><Glyph name="caretBig" /></IconButton>
    </TypeBox>
    <InstanceRow>
      <Select $w={134} $h={23} $bg="#e3e3e3" $line="#adadad">
        <select aria-label="Instance"><option>3D View: {'{3D}'}</option></select>
        <Glyph name="chevronDown" />
      </Select>
      <EditType><Glyph name="editType" />Edit Type</EditType>
    </InstanceRow>
    <GridArea>
      <GridClip>
        <PropTable>
          <colgroup>
            <LabelCol />
            <ValueCol />
            <col />
          </colgroup>
          {propGroups.map(([title, rows]) => (
            <tbody key={title}>
              <GroupRow>
                <th colSpan={3}><div>{title}<Glyph name="collapse" /></div></th>
              </GroupRow>
              {rows.map(([label, kind, value]) => {
                const id = label.toLowerCase().replace(/[^a-z]+/g, '-')
                const control = ['input', 'edit', 'check'].includes(kind)
                return (
                  <PropRow key={label} $muted={kind === 'muted'} $flush={kind === 'input' || kind === 'edit'}>
                    <th scope="row">{control ? <label htmlFor={id}>{label}</label> : label}</th>
                    <td><PropValue kind={kind} value={value} id={id} /></td>
                    <td />
                  </PropRow>
                )
              })}
            </tbody>
          ))}
        </PropTable>
      </GridClip>
      <Scroll $vertical>
        <IconButton aria-label="Scroll up"><Glyph name="chevronUp" /></IconButton>
        <Thumb $size={208} />
        <Track $grow={1} />
        <IconButton aria-label="Scroll down"><Glyph name="chevronDn" /></IconButton>
      </Scroll>
    </GridArea>
    <PaneFoot>
      <a href="#help">Properties help</a>
      <ApplyButton disabled>Apply</ApplyButton>
    </PaneFoot>
  </Properties>
)

/* ---------- drawing area ---------- */

const Document = styled.section`
  display: flex;
  flex-direction: column;
  flex: 1;
  min-width: 0;
  background: #fff;
`

const DocTabs = styled.div`
  display: flex;
  align-items: center;
  justify-content: space-between;
  flex: none;
  height: 20px;
  padding-right: 2px;
  background: #cccccc;
`

const DocTab = styled.div`
  display: flex;
  align-items: center;
  gap: 7px;
  width: 127px;
  height: 20px;
  padding: 0 2px 0 4px;
  background: #fff;
  font-weight: 600;
  color: #333;

  button { margin-left: auto; }
`

const DocBody = styled.div`
  display: flex;
  flex: 1;
  min-height: 0;
  padding: 2px 2px 0 1px;
`

const Canvas = styled.div`
  position: relative;
  flex: 1;
  min-width: 0;
  overflow: hidden;
  margin-right: 1px;
  background: #fff;

  > svg { width: 100%; height: 100%; }
`

const Cube = styled.div`
  position: absolute;
  top: 34px;
  right: 14px;
`

const NavBar = styled.div`
  position: absolute;
  top: 119px;
  right: 1px;
  display: flex;
  flex-direction: column;
  align-items: center;
  width: 34px;
  height: 116px;
  background: rgba(210, 210, 210, 0.4);
  border: 2px solid rgba(120, 120, 120, 0.6);
  border-radius: 4px;
`

const ViewBar = styled.div`
  display: flex;
  align-items: center;
  flex: none;
  height: 17px;
  margin: 0 2px 2px 1px;
  background: #f0f0f0;
`

const ScaleLabel = styled.span`
  width: 76px;
  padding-left: 24px;
  white-space: nowrap;
  color: #111;
`

const ViewTool = styled.button`
  display: flex;
  justify-content: center;
  flex: none;
  width: 21px;
`

const strokes = [
  'M349 268l7 14', 'M333 298l13 3', 'M441 319l7 14', 'M429 350l-6 11', 'M251 346l-6 11', 'M268 358l13 3',
  'M600 288l13 3', 'M534 347l13 3', 'M589 346l7 13', 'M400 389l13 3', 'M221 242l6-6', 'M581 382l-6 10',
  'M666 380l13 3', 'M681 396l6 13', 'M763 275l6 13', 'M796 314l-6 12', 'M800 337l13 3', 'M887 309l-6 12',
  'M854 325l6 13', 'M705 319l-6 12', 'M933 371l13 3', 'M1003 351l6 13', 'M1036 353l-6 13', 'M1093 403l7 13',
  'M978 449l6 13', 'M999 462l14 3', 'M772 446l6 13', 'M787 481l-6 12', 'M932 521l14 3', 'M930 532l9-5',
  'M1056 465l14 3', 'M1092 462l-6 12', 'M1145 470l6-12', 'M1133 571l13 3', 'M562 443l6 3',
  'M633 203l8-4', 'M612 213h16', 'M662 244l7-4', 'M722 216l8 5', 'M772 234l8-5', 'M873 252l8 5',
  'M855 271h15', 'M937 301l8-1 5-3 2 4', 'M954 302l8 5', 'M1105 337l9 5', 'M1098 329h3', 'M840 234h6',
]

const Scene = () => (
  <svg aria-label="3D model of a wall with pipes" role="img" shapeRendering="crispEdges">
    <g transform="translate(-223 -194)" fill="none">
      <path d="M450 194H667L1149 313V366z" fill="#d3d3d3" />
      <path d="M553 194h39L1149 330v11z" fill="#f99746" />
      <path d="M223 194h229l697 171v226L223 363z" fill="#454545" />
      <path d="M436 191l713 175" stroke="#000" strokeWidth="4" />
      <path d="M223 364l926 228" stroke="#0000ff" strokeWidth="3" />
      <path d="M223 362l926 228" stroke="#000" strokeWidth="3" />
      <path d="M917 194h24l-76 40 106 26v11L850 233v-4z" fill="#000" />
      <path d="M973 194h21l-6 6v72l-17-3v-70z" fill="#000" />
      <path d="M935 223h8v-5l3-2 13 2v6l-4 4-9-2v32l-11-2z" fill="#000" />
      <path d="M1149 227l-107 55 16 10 38 6 53-28z" fill="#000" />
      <path d="M640 187l509 126" stroke="#0000ff" strokeWidth="5" />
      {strokes.map((d) => <path key={d} d={d} stroke="#000" strokeWidth="3" />)}
      <path d="M221 557l481-246" stroke="#000" strokeWidth="11" />
      <path
        d="M727 440c2-7 9-12 16-13 12-1 20 7 25 17 4 10 6 22 1 30-5 8-14 9-22 6l-4-20z"
        fill="#ffbb77"
      />
      <path d="M255 684L730 438c10-6 22-6 29 2 6 8 9 18 7 26-2 6-8 9-16 12L352 684z" fill="#000" />
      <path d="M745 422l3 7v4l5 4h-12l-1-8z" fill="#008000" />
      <path d="M748 427h2v5h-2z" fill="#0000ff" />
    </g>
  </svg>
)

const ViewCube = () => (
  <Cube>
    <svg width="96" height="72" viewBox="0 0 96 72" fontFamily="Open Sans, sans-serif">
      <ellipse cx="48" cy="50" rx="40" ry="18" fill="none" stroke="#a0a0a0" strokeOpacity=".35" strokeWidth="9" />
      <ellipse cx="48" cy="50" rx="44" ry="22" fill="none" stroke="#999" strokeOpacity=".5" />
      <path d="M24 13l20-7 27 5-18 9z" fill="#f4f4f4" fillOpacity=".95" stroke="#999" />
      <path d="M24 13l29 7v33l-29-8z" fill="#ededed" fillOpacity=".95" stroke="#999" />
      <path d="M53 20l18-9-1 29-17 13z" fill="#dcdcdc" fillOpacity=".95" stroke="#999" />
      <path d="M25 44V39l28-15 17-9-1 25-16 12z" fill="#222" fillOpacity=".45" />
      <text x="30" y="36" fontSize="7" fontWeight="700" fill="#7c7c7c" transform="rotate(8 30 36)">BACK</text>
      <text x="57" y="42" fontSize="6" fontWeight="700" fill="#555" transform="rotate(-28 57 42)">LEFT</text>
      <path d="M41 12l4-1 2 2 3-2 4 2" stroke="#aaa" fill="none" />
      <path d="M6 42l8-5M10 38l6-3M19 61l6 5 2-5 6 4M80 58l8-4M84 62l5-4" stroke="#d5d5d5" strokeWidth="2" fill="none" />
    </svg>
  </Cube>
)

const Navigation = () => (
  <NavBar>
    <svg width="30" height="112" viewBox="0 0 30 112" fill="none">
      <circle cx="25" cy="4" r="3.500" fill="#999" stroke="#ddd" />
      <path d="M23.500 2.500l3 3M26.500 2.500l-3 3" stroke="#fff" />
      <rect x="4" y="18" width="21" height="21" rx="9" fill="#ddd" fillOpacity=".7" stroke="#8e8e8e" />
      <circle cx="15" cy="29" r="9" stroke="#999" />
      <circle cx="15" cy="29" r="6" fill="#d3d3d3" stroke="#8e8e8e" />
      <path d="M8 35l3-3M22 35l-3-3" stroke="#8e8e8e" />
      <path d="M13 49h5l-2.500 3zM13 91h5l-2.500 3z" fill="#55586a" />
      <path d="M2 56.500h26" stroke="#555" />
      <path d="M7 65h10v11H7z" fill="#6e9a5c" stroke="#5c7d50" />
      <circle cx="18" cy="75" r="3" fill="#bbb" stroke="#888" />
      <path d="M20 78l3 3" stroke="#999" strokeWidth="2" />
      <circle cx="25" cy="107" r="3.500" fill="#777" stroke="#ccc" />
      <path d="M23 106h4M24 108h2" stroke="#fff" />
    </svg>
  </NavBar>
)

const viewTools = ['detail', 'style', 'sun', 'shadow', 'teapot', 'crop', 'cropRegion', 'lockView', 'glasses',
  'reveal', 'tempView', 'analytical', 'displace', 'constraints', 'chevronLeft']

const Grip = () => (
  <svg width="16" height="16" viewBox="0 0 16 16" fill="#bdbdbd">
    <path d="M11 4h2v2h-2zM11 8h2v2h-2zM11 12h2v2h-2zM7 8h2v2H7zM7 12h2v2H7zM3 12h2v2H3z" />
  </svg>
)

const DocumentPane = () => (
  <Document>
    <DocTabs>
      <DocTab>
        <Glyph name="house" />
        {'{3D}'}
        <IconButton aria-label="Close view"><Glyph name="close" /></IconButton>
      </DocTab>
      <IconButton aria-label="View list"><Glyph name="more" /></IconButton>
    </DocTabs>
    <DocBody>
      <Canvas>
        <Scene />
        <ViewCube />
        <Navigation />
      </Canvas>
      <Scroll $vertical>
        <IconButton aria-label="Scroll up"><Glyph name="chevronUp" /></IconButton>
        <Track $grow={1} />
        <Thumb $size={16} />
        <Track $grow={1} />
        <IconButton aria-label="Scroll down"><Glyph name="chevronDn" /></IconButton>
      </Scroll>
    </DocBody>
    <ViewBar>
      <ScaleLabel>1 : 100</ScaleLabel>
      {viewTools.map((t) => (
        <ViewTool key={t} aria-label={t}><Glyph name={t} /></ViewTool>
      ))}
      <Track $grow={1} />
      <Thumb $size={17} />
      <Track $grow={1} />
      <IconButton aria-label="Scroll right"><Glyph name="chevronRight" /></IconButton>
      <Grip />
    </ViewBar>
  </Document>
)

/* ---------- project browser ---------- */

const Browser = styled.aside`
  display: flex;
  flex-direction: column;
  flex: none;
  width: 189px;
  padding-bottom: 2px;
  background: #f0f0f0;
`

const Tree = styled.ul`
  flex: 1 1 0;
  min-height: 0;
  overflow: hidden;
  margin: 0;
  padding: 0 0 0 1px;
  list-style: none;
  background: #fff;
  color: #111;
`

const TreeItem = styled.li`
  display: flex;
  align-items: center;
  height: 18px;
  white-space: nowrap;
`

const TreeLabel = styled.span`
  margin-left: 3px;
  padding: 0 3px;
  line-height: 18px;
  font-weight: ${({ $bold }) => ($bold ? 700 : 400)};
  background: ${({ $selected }) => ($selected ? '#e0e0e0' : 'transparent')};
`

// v: line through, t: branch, e: last branch, f/m/l: minus box (first, middle, last), p/q: plus box
const Guide = ({ kind }) => {
  const up = 'vtemlpq'.includes(kind)
  const down = 'vtfmp'.includes(kind)
  const across = 'tefmlpq'.includes(kind)
  const box = 'fmlpq'.includes(kind)
  return (
    <svg width="20" height="18" viewBox="0 0 20 18" shapeRendering="crispEdges">
      <g stroke="#9a9a9a" strokeDasharray="1 1">
        {up && <path d="M8.500 0v9" />}
        {down && <path d="M8.500 10v8" />}
        {across && <path d="M9 9.500h11" />}
      </g>
      {box && <path d="M4.500 5.500h8v8h-8z" fill="#fff" stroke="#8f8f8f" />}
      {box && <path d="M6 9.500h5" stroke="#2c4fa0" />}
      {'pq'.includes(kind) && <path d="M8.500 7v5" stroke="#2c4fa0" />}
    </svg>
  )
}

const treeRows = [
  ['f', 'Views (all)', 'views'],
  ['vm', '3D Views'],
  ['vvt', 'Analytical Model'],
  ['vve', '{3D}'],
  ['vl', 'Elevations (Building Elevation)'],
  ['v t', 'East'],
  ['v t', 'North'],
  ['v t', 'South'],
  ['v e', 'West'],
  ['t', 'Legends', 'legends'],
  ['m', 'Schedules/Quantities (all)', 'schedules'],
  ['vt', 'Level Schedule'],
  ['ve', 'Rebar Schedule'],
  ['t', 'Sheets (all)', 'sheets'],
  ['p', 'Families', 'families'],
  ['p', 'Groups', 'groups'],
  ['q', 'Revit Links', 'links'],
]

const ProjectBrowser = () => (
  <Browser>
    <PaneHeader>
      Project Browser - Project1.rvt
      <IconButton aria-label="Close browser"><Glyph name="close" /></IconButton>
    </PaneHeader>
    <Tree>
      {treeRows.map(([guides, label, icon]) => (
        <TreeItem key={label}>
          {guides.split('').map((g, i) => <Guide key={i} kind={g} />)}
          {icon && <Glyph name={icon} />}
          <TreeLabel $selected={icon === 'views'} $bold={label === '{3D}'}>{label}</TreeLabel>
        </TreeItem>
      ))}
    </Tree>
    <Scroll>
      <IconButton aria-label="Scroll left"><Glyph name="chevronLeft" /></IconButton>
      <Thumb />
      <Track $grow={1} />
      <IconButton aria-label="Scroll right"><Glyph name="chevronRight" /></IconButton>
    </Scroll>
  </Browser>
)

/* ---------- status bar ---------- */

const StatusBar = styled.footer`
  display: flex;
  align-items: center;
  flex: none;
  height: 24px;
  padding-left: 1px;
  background: #cbcbcb;
  color: #111;
  white-space: nowrap;
`

const StatusText = styled.span`
  width: 331px;
`

const Count = styled.span`
  width: ${({ $w }) => $w}px;
`

const pickTools = ['pickLink', 'pickUnderlay', 'pickPin', 'pickFace', 'drag', 'ring']

const Status = () => (
  <StatusBar>
    <StatusText>Click to select, TAB for alternates, CTRL adds, SHIFT unselects.</StatusText>
    <ToolButton $w={24} aria-label="Worksets"><Glyph name="worksets" /></ToolButton>
    <Spacer $w={4} />
    <Select $w={204} $h={18}>
      <select aria-label="Active workset"><option> </option></select>
      <Glyph name="chevronPale" />
    </Select>
    <ToolButton $w={28} aria-label="Editing requests"><Glyph name="design" /></ToolButton>
    <Count $w={30}>:0</Count>
    <ToolButton $w={24} aria-label="Design options"><Glyph name="options" /></ToolButton>
    <ToolButton $w={28} aria-label="Add to set"><Glyph name="addSet" /></ToolButton>
    <Spacer $w={2} />
    <Select $w={204} $h={18} $muted>
      <select aria-label="Design option"><option>Main Model</option></select>
      <Glyph name="chevronPale" />
    </Select>
    <Track $grow={1} />
    {pickTools.map((t) => (
      <ToolButton key={t} $w={26} aria-label={t}><Glyph name={t} /></ToolButton>
    ))}
    <ToolButton $w={20} aria-label="Filter"><Glyph name="filter" /></ToolButton>
    <Count $w={82}>:0</Count>
  </StatusBar>
)

const App = () => (
  <Window>
    <GlobalStyle />
    <Title />
    <RibbonArea />
    <Workspace>
      <PropertiesPane />
      <DocumentPane />
      <ProjectBrowser />
    </Workspace>
    <Status />
  </Window>
)

export default App
